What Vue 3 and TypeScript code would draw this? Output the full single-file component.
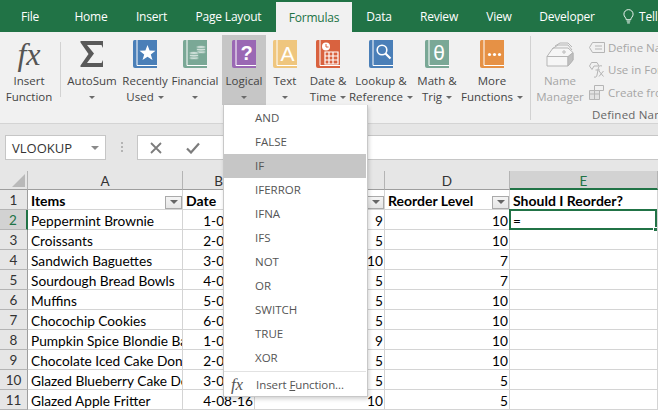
<script setup lang="ts">
const tabs = ['File', 'Home', 'Insert', 'Page Layout', 'Formulas', 'Data', 'Review', 'View', 'Developer']

interface Btn { key: string; a: string; b: string; color: string; inlineArrow: boolean }
const books: Btn[] = [
  { key: 'recent', a: 'Recently', b: 'Used', color: '#4a7fb8', inlineArrow: true },
  { key: 'fin', a: 'Financial', b: '', color: '#7aa896', inlineArrow: false },
  { key: 'logic', a: 'Logical', b: '', color: '#9a68b4', inlineArrow: false },
  { key: 'text', a: 'Text', b: '', color: '#efc67e', inlineArrow: false },
  { key: 'date', a: 'Date &', b: 'Time', color: '#d9623f', inlineArrow: true },
  { key: 'look', a: 'Lookup &', b: 'Reference', color: '#4a7fb8', inlineArrow: true },
  { key: 'math', a: 'Math &', b: 'Trig', color: '#7aa896', inlineArrow: true },
  { key: 'more', a: 'More', b: 'Functions', color: '#e69145', inlineArrow: true },
]

const columns = ['A', 'B', 'C', 'D', 'E']
interface Row { item: string; date: string; stock: string; level: string }
const rows: Row[] = [
  { item: 'Peppermint Brownie', date: '1-08-16', stock: '9', level: '10' },
  { item: 'Croissants', date: '2-08-16', stock: '5', level: '10' },
  { item: 'Sandwich Baguettes', date: '3-08-16', stock: '10', level: '7' },
  { item: 'Sourdough Bread Bowls', date: '4-08-16', stock: '5', level: '7' },
  { item: 'Muffins', date: '5-08-16', stock: '5', level: '10' },
  { item: 'Chocochip Cookies', date: '6-08-16', stock: '5', level: '10' },
  { item: 'Pumpkin Spice Blondie Bars', date: '1-08-16', stock: '9', level: '10' },
  { item: 'Chocolate Iced Cake Donuts', date: '2-08-16', stock: '5', level: '10' },
  { item: 'Glazed Blueberry Cake Donuts', date: '3-08-16', stock: '5', level: '5' },
  { item: 'Glazed Apple Fritter', date: '4-08-16', stock: '10', level: '5' },
]

const menuItems = ['AND', 'FALSE', 'IF', 'IFERROR', 'IFNA', 'IFS', 'NOT', 'OR', 'SWITCH', 'TRUE', 'XOR']
</script>

<template>
  <div class="app">
    <div class="tabbar">
      <div v-for="t in tabs" :key="t" class="tab" :class="{ active: t === 'Formulas' }">{{ t }}</div>
      <div class="tell">
        <svg width="11" height="15" viewBox="0 0 12 16" fill="none" stroke="#fff" stroke-width="1">
          <path d="M3.500 11.500C3.500 9 1 8.500 1 5.500a5 5 0 0 1 10 0c0 3-2.500 3.500-2.500 6zM4 13h4M4.500 15h3" />
        </svg>
        <span>Tell me</span>
      </div>
    </div>

    <div class="ribbon">
      <div class="rbtn">
        <span class="fx-big">fx</span>
        <span class="lbl">Insert</span>
        <span class="lbl">Function</span>
      </div>
      <div class="sep short"></div>
      <div class="rbtn">
        <svg class="ico" width="24" height="28" viewBox="0 0 24 28">
          <path d="M0.500 1H23V8L21.500 5H7L14 13.500L7 23H21.500L23 20V27H0.500V25.500L8.500 14L0.500 2.500Z" fill="#595959" />
        </svg>
        <span class="lbl">AutoSum</span>
        <span class="lbl"><i class="arrow"></i></span>
      </div>
      <div v-for="b in books" :key="b.key" class="rbtn" :class="{ hot: b.key === 'logic' }">
        <svg class="ico" width="24" height="28" viewBox="0 0 24 28">
          <path d="M1.500 0H24V28H2Q0 28 0 26V1.500Q0 0 1.500 0Z" :fill="b.color" />
          <path d="M4 0V25.500M4 25.500H24" stroke="#fff" stroke-width="1" fill="none" />
          <polygon v-if="b.key === 'recent'" points="14.500,5 16.600,10.600 22.500,10.800 17.800,14.400 19.500,20 14.500,16.800 9.500,20 11.200,14.400 6.500,10.800 12.400,10.600" fill="#fff" />
          <g v-if="b.key === 'fin'" fill="#cfe0d9" stroke="#7aa896" stroke-width="0.700">
            <ellipse cx="18" cy="12" rx="4.500" ry="1.500" />
            <ellipse cx="18" cy="9.500" rx="4.500" ry="1.500" />
            <ellipse cx="18" cy="7" rx="4.500" ry="1.500" />
            <ellipse cx="11" cy="18" rx="4.500" ry="1.500" />
            <ellipse cx="11" cy="15.500" rx="4.500" ry="1.500" />
            <ellipse cx="11" cy="13" rx="4.500" ry="1.500" />
          </g>
          <text v-if="b.key === 'logic'" x="14.500" y="20" class="gl q">?</text>
          <text v-if="b.key === 'text'" x="14.500" y="21" class="gl a">A</text>
          <g v-if="b.key === 'date'">
            <circle cx="10" cy="6.500" r="4" fill="#fff" />
            <path d="M10 4V7H12.500" stroke="#d9623f" fill="none" />
            <path d="M9 12H22V24H9ZM9.500 16H21.500M9.500 20H21.500M13 12V24M17 12V24" fill="none" stroke="#fff" stroke-width="1.200" />
          </g>
          <g v-if="b.key === 'look'" fill="none" stroke="#fff">
            <circle cx="13" cy="10" r="4.800" stroke-width="1.600" />
            <path d="M16.500 13.500L21.500 18.500" stroke-width="2.200" />
          </g>
          <text v-if="b.key === 'math'" x="14" y="20" class="gl th">θ</text>
          <g v-if="b.key === 'more'" fill="#fff">
            <circle cx="9.500" cy="14.500" r="1.600" />
            <circle cx="14.500" cy="14.500" r="1.600" />
            <circle cx="19.500" cy="14.500" r="1.600" />
          </g>
        </svg>
        <span class="lbl">{{ b.a }}</span>
        <span class="lbl">{{ b.b }}<i class="arrow" :class="{ side: b.inlineArrow }"></i></span>
      </div>
      <div class="sep"></div>
      <div class="rbtn dim">
        <svg class="ico" width="28" height="26" viewBox="0 0 28 26" fill="none" stroke="#b5b5b5">
          <path d="M1 14.500H22V24H1ZM1 14.500L7 6H22L27 10.500V18L22 24M22 14.500L27 10.500" fill="#f6f6f6" />
          <path d="M6 7L12 3H22L26 8M9 4L14 1H22L26 5" />
          <path d="M22 15V24L27 18V11Z" fill="#c0c0c0" />
          <circle cx="18" cy="10" r="1.200" />
        </svg>
        <span class="lbl">Name</span>
        <span class="lbl">Manager</span>
      </div>
      <div class="names">
        <div class="cmd">
          <svg width="16" height="13" viewBox="0 0 16 13" fill="none" stroke="#b5b5b5">
            <path d="M3.500 1.500H15.500V11.500H3.500L0.500 6.500Z" />
            <path d="M6 5H13M6 8H13" />
          </svg>
          <span>Define Name</span>
        </div>
        <div class="cmd">
          <svg width="16" height="16" viewBox="0 0 16 16" fill="none" stroke="#b5b5b5">
            <path d="M2.500 0.500H8L10 4H5L3 7.500L0.500 4Z" />
            <path d="M13 4C10 3 9.500 5 9 8L8 13C7.800 15 6.500 15.500 5 15M6.500 8H11M10 9L14.500 14.500M14.500 9L10 14.500" />
          </svg>
          <span>Use in Formula</span>
        </div>
        <div class="cmd">
          <svg width="16" height="15" viewBox="0 0 16 15" fill="none" stroke="#b5b5b5">
            <path d="M5.500 0.500H14.500V5.500H5.500Z" />
            <path d="M0.500 5.500H10.500V14.500H0.500ZM0.500 9H10.500M5.500 5.500V14.500" fill="#e2e2e2" />
          </svg>
          <span>Create from Selection</span>
        </div>
        <div class="group-name">Defined Names</div>
      </div>
    </div>

    <div class="fbar">
      <div class="namebox">
        <span>VLOOKUP</span>
        <i class="arrow grey"></i>
      </div>
      <div class="grip"></div>
      <div class="finput">
        <svg width="12" height="12" viewBox="0 0 12 12" stroke="#7c7c7c" stroke-width="1.800" fill="none">
          <path d="M1 1L11 11M11 1L1 11" />
        </svg>
        <svg width="14" height="12" viewBox="0 0 14 12" stroke="#7c7c7c" stroke-width="2.200" fill="none">
          <path d="M1 6.500L5 10.500L13 1.500" />
        </svg>
      </div>
    </div>

    <div class="sheet">
      <div class="corner"><i></i></div>
      <div v-for="c in columns" :key="c" class="colh" :class="{ sel: c === 'E' }">{{ c }}</div>

      <div class="rowh">1</div>
      <div class="cell bold has-filter">Items<i class="filter"></i></div>
      <div class="cell bold has-filter">Date<i class="filter"></i></div>
      <div class="cell bold has-filter">Stock<i class="filter"></i></div>
      <div class="cell bold has-filter">Reorder Level<i class="filter"></i></div>
      <div class="cell bold">Should I Reorder?</div>

      <template v-for="(r, i) in rows" :key="i">
        <div class="rowh" :class="{ sel: i === 0 }">{{ i + 2 }}</div>
        <div class="cell">{{ r.item }}</div>
        <div class="cell num">{{ r.date }}</div>
        <div class="cell num">{{ r.stock }}</div>
        <div class="cell num">{{ r.level }}</div>
        <div class="cell" :class="{ current: i === 0 }">{{ i === 0 ? '=' : '' }}</div>
      </template>
    </div>

    <div class="menu">
      <div v-for="m in menuItems" :key="m" class="mitem" :class="{ on: m === 'IF' }">{{ m }}</div>
      <div class="mfoot">
        <span class="fx-small">fx</span>
        <span>Insert <u>F</u>unction...</span>
      </div>
    </div>
  </div>
</template>

<style>
html, body { margin: 0; padding: 0; background: #fff; }
</style>

<style scoped>
.app {
  width: 658px;
  height: 410px;
  overflow: hidden;
  position: relative;
  display: flex;
  flex-direction: column;
  font-family: "Open Sans", "Noto Sans", sans-serif;
  font-size: 11.5px;
  color: #444;
  background: #fff;
}
.tabbar {
  height: 32px;
  flex: none;
  background: #217346;
  display: grid;
  grid-template-columns: 60px 62px 59px 95px 76px 54px 66px 54px 82px 50px;
  color: #fff;
  font-size: 12px;
  letter-spacing: -0.2px;
  white-space: nowrap;
  overflow: hidden;
}
.tab {
  display: flex;
  align-items: center;
  justify-content: center;
}
.tab.active {
  background: #f1f1f1;
  color: #217346;
  margin-top: 2px;
}
.tell {
  display: flex;
  align-items: center;
  gap: 5px;
  padding-left: 15px;
}
.tell svg { flex: none; }
.ribbon {
  height: 92px;
  flex: none;
  box-sizing: border-box;
  background: #f1f1f1;
  border-bottom: 1px solid #d4d4d4;
  display: grid;
  grid-template-columns: 58px 4px 60px 46px 54px 44px 38px 48px 58px 54px 56px 20px 40px 1fr;
  overflow: hidden;
  white-space: nowrap;
}
.rbtn {
  height: 70px;
  margin-top: 3px;
  display: flex;
  flex-direction: column;
  align-items: center;
}
.rbtn.hot { background: #c6c6c6; }
.rbtn.dim { color: #a6a6a6; }
.ico {
  flex: none;
  margin-top: 5px;
  height: 28px;
  margin-bottom: 5px;
}
.rbtn.dim .ico { margin-top: 7px; height: 26px; margin-bottom: 5px; }
.fx-big {
  font-family: "Liberation Serif", serif;
  font-style: italic;
  font-size: 32px;
  line-height: 28px;
  height: 28px;
  margin-top: 5px;
  margin-bottom: 5px;
  color: #555;
}
.lbl {
  height: 16px;
  line-height: 16px;
  flex: none;
  display: flex;
  align-items: center;
  justify-content: center;
}
.arrow {
  width: 0;
  height: 0;
  display: block;
  border-left: 3px solid transparent;
  border-right: 3px solid transparent;
  border-top: 3px solid #6a6a6a;
  margin-top: 1px;
}
.arrow.side { margin-left: 4px; }
.arrow.grey { border-top-color: #8a8a8a; border-left-width: 4px; border-right-width: 4px; border-top-width: 4px; }
.sep {
  width: 1px;
  justify-self: center;
  background: #d2d2d2;
  height: 84px;
  margin-top: 4px;
}
.sep.short {
  height: 55px;
  margin-top: 10px;
}
.names {
  padding: 4px 0 0 9px;
  color: #a6a6a6;
  display: flex;
  flex-direction: column;
  overflow: hidden;
}
.cmd {
  height: 22.5px;
  display: flex;
  align-items: center;
  gap: 3px;
  flex: none;
}
.cmd svg { flex: none; }
.group-name {
  color: #666;
  margin-top: 3px;
  padding-left: 3px;
  font-size: 11.500px;
  letter-spacing: 0.2px;
}
.fbar {
  height: 47px;
  flex: none;
  background: #e6e6e6;
  display: flex;
  align-items: flex-start;
  padding-top: 11px;
  box-sizing: border-box;
}
.namebox {
  margin-left: 5px;
  width: 101px;
  height: 25px;
  box-sizing: border-box;
  background: #fff;
  border: 1px solid #c6c6c6;
  display: flex;
  align-items: center;
  justify-content: space-between;
  padding: 0 6px;
  font-size: 13px;
  color: #333;
}
.grip {
  width: 2px;
  height: 10px;
  margin: 7px 14px 0 15px;
  background: repeating-linear-gradient(#b4b4b4 0 2px, transparent 2px 4px);
}
.finput {
  flex: 1;
  height: 25px;
  box-sizing: border-box;
  background: #fff;
  border: 1px solid #c6c6c6;
  border-right: none;
  display: flex;
  align-items: center;
  gap: 24px;
  padding-left: 12px;
}
.sheet {
  flex: 1;
  background: #e6e6e6;
  display: grid;
  grid-template-columns: 28px 155px 72px 130px 125px 148px;
  grid-template-rows: 19px repeat(11, 20px);
  font-family: "Lato", "Carlito", sans-serif;
  font-size: 13.7px;
  color: #000;
}
.corner {
  box-sizing: border-box;
  border-right: 1px solid #b4b4b4;
  border-bottom: 1px solid #9e9e9e;
  display: flex;
  align-items: flex-end;
  justify-content: flex-end;
  padding: 0 2px 2px 0;
}
.corner i {
  width: 0;
  height: 0;
  display: block;
  border-left: 13px solid transparent;
  border-bottom: 13px solid #b9b9b9;
}
.colh {
  box-sizing: border-box;
  border-right: 1px solid #b4b4b4;
  border-bottom: 1px solid #9e9e9e;
  padding-top: 2px;
  display: flex;
  align-items: center;
  justify-content: center;
  color: #333;
  font-size: 13.500px;
}
.colh.sel {
  background: #d2d2d2;
  border-bottom: 2px solid #217346;
  color: #217346;
}
.rowh {
  box-sizing: border-box;
  border-right: 1px solid #9e9e9e;
  border-bottom: 1px solid #b4b4b4;
  padding-top: 1px;
  display: flex;
  align-items: center;
  justify-content: center;
  color: #333;
  font-size: 13.500px;
}
.rowh.sel {
  background: #d2d2d2;
  color: #217346;
  border-right: 2px solid #217346;
}
.cell {
  box-sizing: border-box;
  background: #fff;
  border-right: 1px solid #d4d4d4;
  border-bottom: 1px solid #d4d4d4;
  padding: 2px 1px 0 3px;
  display: flex;
  align-items: center;
  white-space: nowrap;
  overflow: hidden;
  position: relative;
}
.cell.num { justify-content: flex-end; }
.cell.bold { font-weight: 700; font-size: 14px; }
.has-filter { overflow: visible; }
.filter {
  position: absolute;
  right: 0;
  top: 6px;
  width: 17px;
  height: 13px;
  box-sizing: border-box;
  background: linear-gradient(#f4f4f4, #e6e6e6);
  border: 1px solid #aaa;
}
.filter::after {
  content: "";
  position: absolute;
  left: 4px;
  top: 3px;
  border-left: 4px solid transparent;
  border-right: 4px solid transparent;
  border-top: 4px solid #666;
}
.cell.current {
  overflow: visible;
  z-index: 1;
}
.cell.current::before {
  content: "";
  position: absolute;
  left: -1px;
  right: 0;
  top: -1px;
  bottom: -1px;
  border: 2px solid #217346;
  pointer-events: none;
}
.cell.current::after {
  content: "";
  position: absolute;
  right: 0;
  bottom: -2px;
  width: 3px;
  height: 3px;
  background: #217346;
  border-top: 1px solid #fff;
  border-left: 1px solid #fff;
}
.menu {
  position: absolute;
  left: 223px;
  top: 105px;
  width: 145px;
  height: 292px;
  box-sizing: border-box;
  background: #fff;
  border: 1px solid #c8c8c8;
  border-top: none;
  box-shadow: 1px 2px 4px rgba(0, 0, 0, 0.18);
  display: flex;
  flex-direction: column;
  padding-top: 1px;
  color: #555;
  z-index: 5;
  font-size: 11.500px;
}
.mitem {
  height: 24px;
  line-height: 24px;
  padding-left: 31px;
  flex: none;
  margin-right: 1px;
}
.mitem.on { background: #c6c6c6; }
.mfoot {
  margin-top: 1px;
  margin-right: 1px;
  padding-top: 1px;
  border-top: 1px solid #e2e2e2;
  height: 26px;
  display: flex;
  align-items: center;
  gap: 13px;
  padding-left: 7px;
  letter-spacing: -0.1px;
}
.fx-small {
  font-family: "Liberation Serif", serif;
  font-style: italic;
  font-size: 17px;
  color: #555;
}
.gl {
  fill: #fff;
  text-anchor: middle;
  font-family: "Liberation Sans", sans-serif;
}
.gl.q { font-size: 20px; font-weight: 700; }
.gl.a { font-size: 21px; }
.gl.th { font-size: 19px; font-family: "DejaVu Sans", sans-serif; }
</style>
